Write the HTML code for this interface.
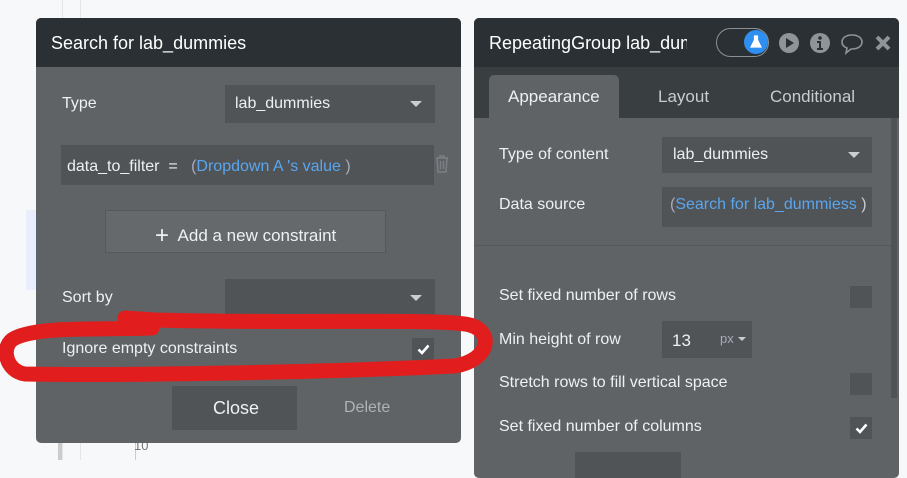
<!DOCTYPE html>
<html><head><meta charset="utf-8"><style>
*{margin:0;padding:0;box-sizing:border-box}
body{width:907px;height:460px;overflow:hidden;position:relative;background:#f7f8f9;font-family:"Liberation Sans",sans-serif;color:#eef0f1}
.a{position:absolute}
.p{background:#5f6366;border-radius:5px;overflow:hidden}
.hd{background:#2a3033;height:49px;left:0;right:0;top:0}
.t{font-size:16px;white-space:nowrap}
.dd{background:#505457}
.tri{position:absolute;width:0;height:0;border-left:6px solid transparent;border-right:6px solid transparent;border-top:6px solid #c9ced2}
.cb{background:#505457;width:22px;height:22px}
.blue{color:#59a6f0}
</style></head><body>
<div class="a" style="left:62px;top:0;width:1px;height:460px;background:#e3e5e7"></div>
<div class="a" style="left:80px;top:0;width:1px;height:460px;background:#e3e5e7"></div>
<div class="a" style="left:26px;top:210px;width:10px;height:80px;background:#e8eefb"></div>
<div class="a" style="left:135px;top:440px;width:1px;height:20px;background:#ccc"></div>
<div class="a t" style="left:134px;top:438px;font-size:13px;color:#777">10</div>
<div class="a" style="left:58px;top:440px;width:4px;height:20px;background:#ccc"></div>

<div class="a p" style="left:36px;top:18px;width:425px;height:425px">
 <div class="a hd"></div>
 <div class="a t" style="left:15px;top:15px;font-size:18px;color:#fff">Search for lab_dummies</div>
 <div class="a t" style="left:26px;top:77px">Type</div>
 <div class="a dd" style="left:189px;top:67px;width:210px;height:38px"></div>
 <div class="a t" style="left:199px;top:77px">lab_dummies</div>
 <div class="tri" style="left:374px;top:83px"></div>
 <div class="a dd" style="left:25px;top:127px;width:373px;height:40px"></div>
 <div class="a t" style="left:31px;top:140px">data_to_filter&nbsp; = &nbsp;&nbsp;<span style="color:#aab">(</span><span class="blue">Dropdown A 's value </span><span style="color:#aab">)</span></div>
 <svg class="a" style="left:399px;top:137px" width="14" height="18" viewBox="0 0 14 18"><g fill="none" stroke="#7b8084" stroke-width="1.5"><path d="M1 3h12M5 3V1h4v2M2 3l1 14h8l1-14M5.5 6v8M8.5 6v8"/></g></svg>
 <div class="a" style="left:69px;top:192px;width:281px;height:43px;background:#65696c;border:1px solid #55595c"></div>
 <div class="a t" style="left:119px;top:202px;font-size:17px"><span style="font-size:24px;position:relative;top:2px">+</span>&nbsp; Add a new constraint</div>
 <div class="a t" style="left:26px;top:271px">Sort by</div>
 <div class="a dd" style="left:189px;top:261px;width:210px;height:38px"></div>
 <div class="tri" style="left:374px;top:277px"></div>
 <div class="a t" style="left:26px;top:322px">Ignore empty constraints</div>
 <div class="a cb" style="left:376px;top:320px"></div>
 <svg class="a" style="left:381px;top:326px" width="13" height="11" viewBox="0 0 13 11"><path d="M1.5 5.5l3.5 3.5 6.5-7.5" fill="none" stroke="#fff" stroke-width="2.6"/></svg>
 <div class="a dd" style="left:136px;top:368px;width:125px;height:44px"></div>
 <div class="a t" style="left:177px;top:380px;font-size:18px">Close</div>
 <div class="a t" style="left:308px;top:381px;color:#aeb2b5">Delete</div>
</div>

<div class="a p" style="left:474px;top:18px;width:425px;height:460px">
 <div class="a hd"></div>
 <div class="a t" style="left:15px;top:15px;font-size:18px;color:#fff;width:198px;overflow:hidden">RepeatingGroup lab_dummies</div>
 <div class="a" style="left:242px;top:10px;width:53px;height:29px;border:1.5px solid #8a9094;border-radius:15px"></div>
 <div class="a" style="left:270px;top:12px;width:24px;height:24px;border-radius:50%;background:#2e8ff0"></div>
 <svg class="a" style="left:275px;top:17px" width="14" height="14" viewBox="0 0 14 14"><path d="M5 1h4M5.5 1v4L2 12h10L8.5 5V1" fill="#fff" stroke="#fff" stroke-width="1.2"/></svg>
 <svg class="a" style="left:304px;top:14px" width="22" height="22" viewBox="0 0 22 22"><circle cx="11" cy="11" r="10" fill="#8e9498"/><path d="M8 6l8 5-8 5z" fill="#2a3033"/></svg>
 <svg class="a" style="left:335px;top:14px" width="22" height="22" viewBox="0 0 22 22"><circle cx="11" cy="11" r="10" fill="#8e9498"/><circle cx="11" cy="6" r="1.8" fill="#2a3033"/><path d="M8 9h4v7h2v2H8v-2h2v-5H8z" fill="#2a3033"/></svg>
 <svg class="a" style="left:366px;top:15px" width="24" height="22" viewBox="0 0 24 22"><path d="M12 2C6 2 2 5 2 9c0 3 2 5 5 6l-1 5 5-4h1c6 0 10-3 10-7s-4-7-10-7z" fill="none" stroke="#8e9498" stroke-width="1.6"/></svg>
 <svg class="a" style="left:401px;top:17px" width="16" height="16" viewBox="0 0 16 16"><path d="M2 2l12 12M14 2L2 14" stroke="#8e9498" stroke-width="4"/></svg>
 <div class="a" style="left:0;top:49px;width:425px;height:51px;background:#393e41"></div>
 <div class="a" style="left:15px;top:57px;width:130px;height:43px;background:#5f6366;border-radius:5px 5px 0 0"></div>
 <div class="a t" style="left:34px;top:69px;font-size:17px">Appearance</div>
 <div class="a t" style="left:184px;top:69px;font-size:17px;color:#c8ccd0">Layout</div>
 <div class="a t" style="left:296px;top:69px;font-size:17px;color:#c8ccd0">Conditional</div>
 <div class="a" style="left:417px;top:100px;width:6px;height:280px;background:#4f5357"></div>
 <div class="a t" style="left:25px;top:128px">Type of content</div>
 <div class="a dd" style="left:188px;top:119px;width:210px;height:36px"></div>
 <div class="a t" style="left:199px;top:128px">lab_dummies</div>
 <div class="tri" style="left:374px;top:134px"></div>
 <div class="a t" style="left:25px;top:178px">Data source</div>
 <div class="a dd" style="left:188px;top:169px;width:210px;height:40px"></div>
 <div class="a t" style="left:196px;top:178px"><span style="color:#aab">(</span><span class="blue">Search for lab_dummiess </span><span style="color:#ccc">)</span></div>
 <div class="a" style="left:0;top:227px;width:417px;height:1px;background:#54585b"></div>
 <div class="a t" style="left:25px;top:269px">Set fixed number of rows</div>
 <div class="a cb" style="left:376px;top:268px"></div>
 <div class="a t" style="left:25px;top:313px">Min height of row</div>
 <div class="a dd" style="left:188px;top:303px;width:90px;height:37px"></div>
 <div class="a t" style="left:198px;top:313px;font-size:17px">13</div>
 <div class="a t" style="left:246px;top:313px;font-size:13px;color:#aab">px</div>
 <div class="tri" style="left:264px;top:319px;border-width:4px 4px 0 4px"></div>
 <div class="a t" style="left:25px;top:356px">Stretch rows to fill vertical space</div>
 <div class="a cb" style="left:376px;top:355px"></div>
 <div class="a t" style="left:25px;top:400px">Set fixed number of columns</div>
 <div class="a cb" style="left:376px;top:399px"></div>
 <svg class="a" style="left:381px;top:405px" width="13" height="11" viewBox="0 0 13 11"><path d="M1.5 5.5l3.5 3.5 6.5-7.5" fill="none" stroke="#fff" stroke-width="2.6"/></svg>
 <div class="a dd" style="left:101px;top:434px;width:106px;height:30px"></div>
</div>

<svg class="a" style="left:0;top:0" width="907" height="460"><path d="M125 318 L155 320 C300 324 440 318 470 325 C494 332 490 360 455 366 C350 371 150 376 25 374 C5 371 0 345 15 338 C40 326 100 330 152 328" fill="none" stroke="#e21d1d" stroke-width="15" stroke-linecap="round" stroke-linejoin="round"/></svg>
</body></html>
